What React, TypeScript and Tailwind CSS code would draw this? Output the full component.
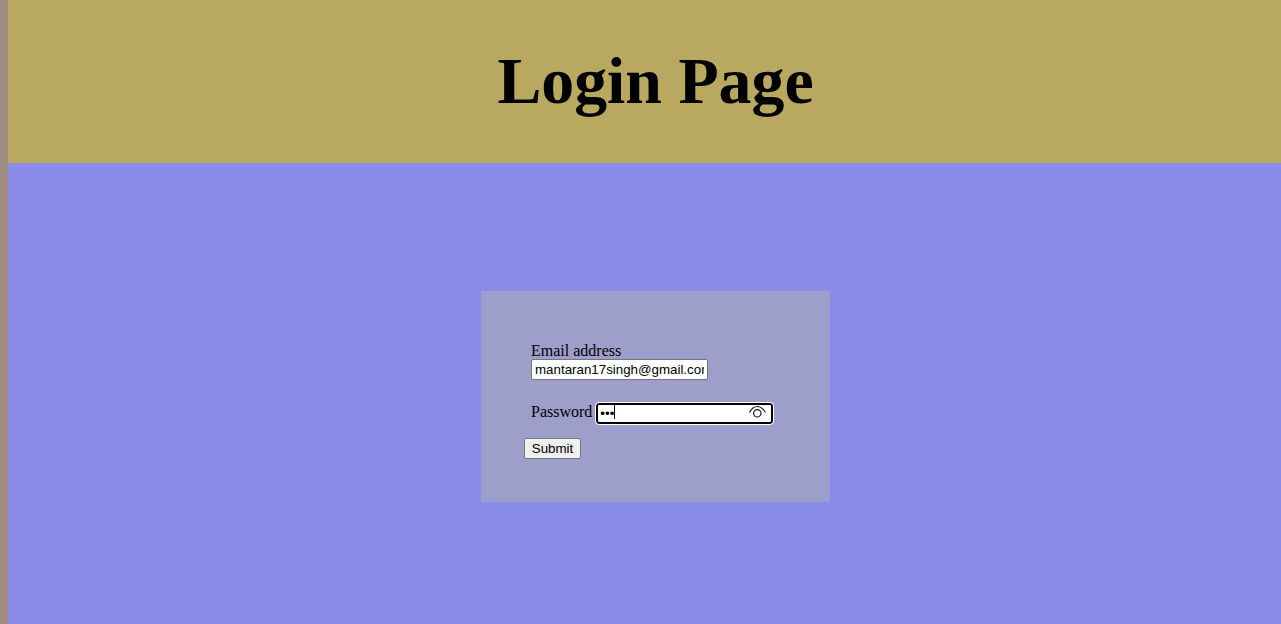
import React from "react";

export default function App() {
  return (
    <div className="flex min-h-[624px] bg-[#a08c80] pl-2 font-['Liberation_Serif',serif] text-black">
      <div className="flex min-w-0 flex-1 flex-col bg-[#8b8bea]">
        <header className="flex h-[163px] items-center justify-center bg-[#b9a85f] pb-[1px] pl-[22px]">
          <h1 className="text-[65.8px] font-bold leading-none">Login Page</h1>
        </header>
        <main className="flex justify-center pl-[22px] pt-[128px]">
          <form className="flex h-[211px] w-[349px] flex-col bg-[#9e9eca] pl-[43px] pt-[51px] text-base" onSubmit={(e) => e.preventDefault()}>
            <div className="flex flex-col items-start pl-[7px]">
              <label className="leading-[17px]">Email address</label>
              <input
                readOnly
                type="email"
                value="mantaran17singh@gmail.com"
                className="h-[21px] w-[177px] rounded-[2px] border border-[#767676] bg-white px-[3px] font-['Liberation_Sans',sans-serif] text-[13.33px] outline-none"
              />
            </div>
            <div className="mt-[21px] flex items-center pl-[7px]">
              <label className="mr-[4px] leading-[18px]">Password</label>
              <div className="relative h-[21px] w-[177px]">
                <input
                  readOnly
                  type="password"
                  value="abc"
                  className="h-full w-full rounded-[3px] border-2 border-black bg-white px-[2px] font-['Liberation_Sans',sans-serif] text-[13.33px] outline outline-1 outline-white"
                />
                <span className="absolute left-[18px] top-[3px] h-[15px] w-px bg-black" />
                <svg className="absolute left-[152px] top-[4px]" width="19" height="15" viewBox="0 0 19 15" fill="none" stroke="#1a1a1a" strokeWidth="1.2">
                  <path d="M1.5 7.5 C3.5 3.5 6 1.5 9.3 1.5 C12.6 1.5 15 3.5 17.5 7.5" />
                  <circle cx="9.3" cy="8.3" r="3.7" />
                </svg>
              </div>
            </div>
            <div className="mt-[14px]">
              <button
                type="submit"
                className="h-[21px] w-[57px] rounded-[2px] border border-[#767676] bg-[#efefef] font-['Liberation_Sans',sans-serif] text-[13.33px] leading-none"
              >
                Submit
              </button>
            </div>
          </form>
        </main>
      </div>
    </div>
  );
}
